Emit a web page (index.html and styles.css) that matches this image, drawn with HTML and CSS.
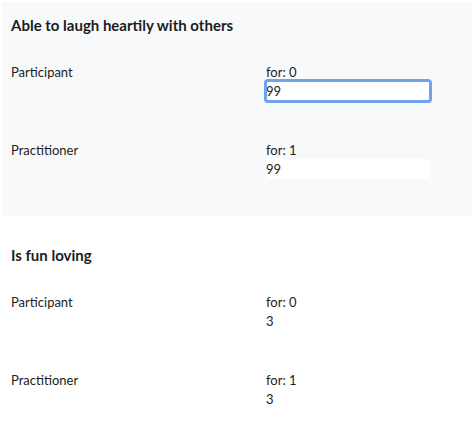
FILE: index.html
```html
<!DOCTYPE html>
<html>
<head>
<meta charset="utf-8">
<link rel="stylesheet" href="styles.css">
</head>
<body>
  <section class="group group-active">
    <h2 class="group-title">Able to laugh heartily with others</h2>
    <div class="row">
      <div class="role">Participant</div>
      <div class="value-col">
        <div class="for">for: 0</div>
        <input class="score score-focus" type="text" value="99">
      </div>
    </div>
    <div class="row">
      <div class="role">Practitioner</div>
      <div class="value-col">
        <div class="for">for: 1</div>
        <input class="score" type="text" value="99">
      </div>
    </div>
  </section>
  <section class="group">
    <h2 class="group-title">Is fun loving</h2>
    <div class="row">
      <div class="role">Participant</div>
      <div class="value-col">
        <div class="for">for: 0</div>
        <div class="score-text">3</div>
      </div>
    </div>
    <div class="row">
      <div class="role">Practitioner</div>
      <div class="value-col">
        <div class="for">for: 1</div>
        <div class="score-text">3</div>
      </div>
    </div>
  </section>
</body>
</html>
```

FILE: styles.css
```css
html, body {
  margin: 0;
  padding: 0;
  background: #ffffff;
}
body {
  font-family: Lato, "Noto Sans", sans-serif;
  color: #1b1d20;
  font-size: 13px;
}
.group {
  margin: 2px 2px 16px;
  padding: 13px 9px 0;
  display: flex;
  flex-direction: column;
}
.group-active {
  background: #f8f9fb;
  padding-bottom: 37px;
}
.group-title {
  margin: 0 0 28px;
  font-size: 15px;
  line-height: 20px;
  font-weight: 700;
}
.row {
  display: grid;
  grid-template-columns: 255px 164px;
  margin-bottom: 40px;
}
.group-active .row:last-child {
  margin-bottom: 0;
}
.role, .for {
  line-height: 18px;
}
.value-col {
  display: flex;
  flex-direction: column;
}
.score {
  font: inherit;
  color: inherit;
  width: 164px;
  height: 20px;
  box-sizing: border-box;
  border: none;
  margin: 0;
  padding: 0;
  background: #ffffff;
  line-height: 20px;
}
.score-focus {
  outline: 3px solid #72a2ea;
  outline-offset: -1px;
  border-radius: 2px;
}
.score-text {
  line-height: 20px;
}
```
